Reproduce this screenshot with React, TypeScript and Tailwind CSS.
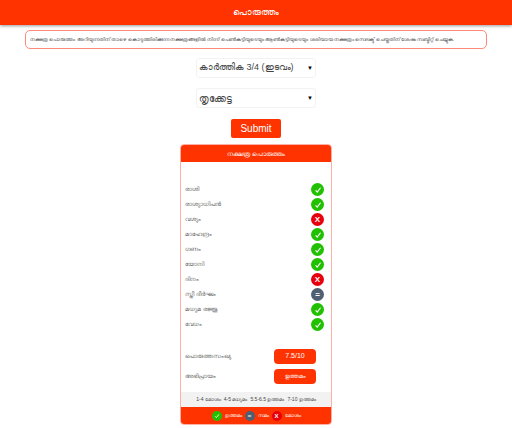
const rows = [
  ['രാശി', 'y'],
  ['രാശ്യാധിപൻ', 'y'],
  ['വശ്യം', 'n'],
  ['മാഹേന്ദ്രം', 'y'],
  ['ഗണം', 'y'],
  ['യോനി', 'y'],
  ['ദിനം', 'n'],
  ['സ്ത്രീ ദീർഘം', 'e'],
  ['മധ്യമ രജ്ജു', 'y'],
  ['വേധം', 'y'],
];

const Mark = ({ kind, small }: { kind: string; small?: boolean }) => {
  const size = small ? 'h-[10px] w-[10px] text-[6px]' : 'h-[13px] w-[13px] text-[8px]';
  if (kind === 'y') {
    return (
      <span className={`flex items-center justify-center rounded-full bg-[#21c000] ${size}`}>
        <svg className={small ? 'h-[6px] w-[6px]' : 'h-[8px] w-[8px]'} viewBox="0 0 10 10" fill="none" stroke="white" strokeWidth={1.4}>
          <path d="M2 5.5l2 2.2L8.2 2.2" />
        </svg>
      </span>
    );
  }
  if (kind === 'n') {
    return <span className={`flex items-center justify-center rounded-full bg-[#e8000d] font-bold leading-none text-white ${size}`}>X</span>;
  }
  return <span className={`flex items-center justify-center rounded-full bg-[#4f6072] font-bold leading-none text-white ${size}`}>=</span>;
};

const Select = ({ value, textSize }: { value: string; textSize: string }) => (
  <div className={`flex h-[20px] w-[120px] items-center justify-between rounded-[3px] border border-[#f2f2f2] bg-white px-[2px] whitespace-nowrap text-[#444444] ${textSize}`}>
    <span>{value}</span>
    <span className="text-[6px] text-black">▼</span>
  </div>
);

export default function App() {
  return (
    <div className="h-[428px] w-[512px] overflow-hidden bg-white font-['Liberation_Sans','Noto_Sans',sans-serif]">
      <header className="flex h-[25px] items-center justify-center bg-[#ff3300] text-[8.5px] text-white shadow-[0_1px_3px_rgba(0,0,0,0.4)]">
        പൊരുത്തം
      </header>
      <p className="mx-[25px] mt-[5px] flex h-[19px] items-center rounded-[5px] border border-[#ff8a78] px-[4px] text-[5px] whitespace-nowrap text-[#444444]">
        നക്ഷത്ര പൊരുത്തം അറിയുന്നതിന് താഴെ കൊടുത്തിരിക്കുന്ന നക്ഷത്രങ്ങളിൽ നിന്ന് പെൺകുട്ടിയുടെയും ആൺകുട്ടിയുടെയും ശരിയായ നക്ഷത്രം സെലക്ട് ചെയ്തതിന് ശേഷം സബ്മിറ്റ് ചെയ്യുക.
      </p>
      <div className="mt-[9px] flex flex-col items-center">
        <Select value="കാർത്തിക 3/4 (ഇടവം)" textSize="text-[9px]" />
        <div className="mt-[10px]">
          <Select value="തൃക്കേട്ട" textSize="text-[10px]" />
        </div>
        <button className="mt-[11px] h-[19px] w-[50px] rounded-[2px] bg-[#ff3300] text-[10px] text-white">Submit</button>
        <section className="mt-[6px] flex w-[152px] flex-col overflow-hidden rounded-[4px] border border-[#ffb0a6]">
          <div className="flex h-[17px] items-center justify-center bg-[#ff3300] text-[6.5px] text-white">നക്ഷത്ര പൊരുത്തം</div>
          <ul className="mt-[21px] flex flex-col gap-[2px] pl-[4px] pr-[7px]">
            {rows.map(([label, kind]) => (
              <li key={label} className="flex h-[13px] items-center justify-between text-[6px] text-[#666666]">
                <span>{label}</span>
                <Mark kind={kind} />
              </li>
            ))}
          </ul>
          <div className="mt-[18px] flex flex-col gap-[5px] pl-[4px] pr-[15px] text-[6px] text-[#666666]">
            <div className="flex items-center justify-between">
              <span>പൊരുത്തസംഖ്യ</span>
              <span className="flex h-[15px] w-[42px] items-center justify-center rounded-[4px] bg-[#ff3300] text-[7px] text-white">7.5/10</span>
            </div>
            <div className="flex items-center justify-between">
              <span>അഭിപ്രായം</span>
              <span className="flex h-[15px] w-[42px] items-center justify-center rounded-[4px] bg-[#ff3300] text-[6px] text-white">ഉത്തമം</span>
            </div>
          </div>
          <div className="mt-[8px] flex h-[15px] items-center justify-center gap-[3px] bg-[#f2f2f2] text-[5px] text-[#444444]">
            <span>1-4 മോശം</span>
            <span>4-5 മധ്യമം</span>
            <span>5.5-6.5 ഉത്തമം</span>
            <span>7-10 ഉത്തമം</span>
          </div>
          <div className="flex h-[17px] items-center justify-center gap-[3px] bg-[#ff3300] text-[5px] text-white">
            <Mark kind="y" small />
            <span>ഉത്തമം</span>
            <Mark kind="e" small />
            <span>സമം</span>
            <Mark kind="n" small />
            <span>മോശം</span>
          </div>
        </section>
      </div>
    </div>
  );
}
